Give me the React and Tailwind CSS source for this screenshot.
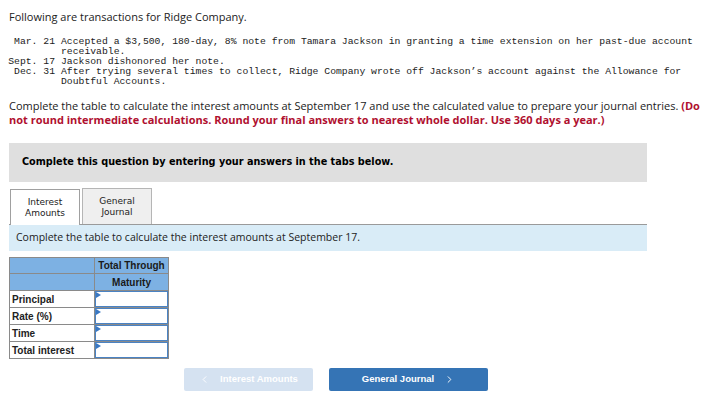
import React from 'react';
import { ChevronLeft, ChevronRight } from 'lucide-react';

const sans = { fontFamily: '"Open Sans", Lato, Arial, sans-serif' };

const transactions = [
    { date: 'Mar. 21', text: 'Accepted a $3,500, 180-day, 8% note from Tamara Jackson in granting a time extension on her past-due account receivable.' },
    { date: 'Sept. 17', text: 'Jackson dishonored her note.' },
    { date: 'Dec. 31', text: 'After trying several times to collect, Ridge Company wrote off Jackson\u2019s account against the Allowance for Doubtful Accounts.' },
];

const rows = ['Principal', 'Rate (%)', 'Time', 'Total interest'];

const InputCell = () => (
    <td className="p-0 border border-[#8a8a8a] bg-white">
        <div className="relative h-[16px] border border-[#4a83c4] bg-white">
            <span className="absolute left-0 top-0 w-0 h-0 border-t-[3px] border-b-[3px] border-l-[5px] border-t-transparent border-b-transparent border-l-[#3a78c3]" />
        </div>
    </td>
);

const App = () => {
    return (
        <div className="w-[720px] h-[401px] bg-white text-[#222] overflow-hidden">
            <p className="pt-[10px] pl-[9px] text-[11px] leading-[14px]" style={sans}>
                Following are transactions for Ridge Company.
            </p>

            <div className="mt-[13px] pl-[7px] text-[9.75px] leading-[10px] text-[#222]" style={{ fontFamily: '"Liberation Mono", "Courier New", monospace' }}>
                {transactions.map((t) => (
                    <div key={t.date} className="flex">
                        <div className="w-[48px] text-right shrink-0 whitespace-pre">{t.date}</div>
                        <div className="w-[645px] pl-[6px]">{t.text}</div>
                    </div>
                ))}
            </div>

            <p className="mt-[12px] px-[9px] text-[11px] leading-[14px]" style={sans}>
                Complete the table to calculate the interest amounts at September 17 and use the calculated value to prepare your journal entries.{' '}
                <span className="font-bold text-[#b0102f]">(Do not round intermediate calculations. Round your final answers to nearest whole dollar. Use 360 days a year.)</span>
            </p>

            <div className="ml-[9px] mt-[16px] w-[638px] h-[39px] bg-[#dfdfdf] flex items-center pl-[13px] text-[9.7px] font-bold text-black" style={{ fontFamily: '"DejaVu Sans", Verdana, sans-serif' }}>
                Complete this question by entering your answers in the tabs below.
            </div>

            <div className="ml-[9px] mt-[6px] w-[638px]" style={{ fontFamily: '"DejaVu Sans", Verdana, sans-serif' }}>
                <div className="flex gap-[2px] pl-[1px] h-[36px] items-end">
                    <div className="w-[70px] h-[36px] border border-b-0 border-[#a0a0a0] bg-white flex items-center justify-center text-center text-[9px] leading-[11px] relative top-[1px] z-10">
                        Interest<br />Amounts
                    </div>
                    <div className="w-[70px] h-[36px] border border-b-0 border-[#b5b5b5] bg-[#efefef] flex items-center justify-center text-center text-[9px] leading-[11px]">
                        General<br />Journal
                    </div>
                </div>
                <div className="h-[27px] border-t border-[#9a9a9a] bg-[#d9ecf7] flex items-center pl-[7px] text-[10.5px]" style={sans}>
                    Complete the table to calculate the interest amounts at September 17.
                </div>
            </div>

            <table className="ml-[9px] mt-[6px] border-collapse text-[10px] font-bold" style={{ fontFamily: '"Liberation Sans", Arial, sans-serif' }}>
                <thead>
                    <tr className="h-[16px]">
                        <th className="w-[85px] border border-[#8a8a8a] bg-[#7db1e3]"></th>
                        <th className="w-[74px] border border-[#8a8a8a] bg-[#7db1e3] text-center font-bold text-[#1a1a1a]">Total Through</th>
                    </tr>
                    <tr className="h-[17px]">
                        <th className="border border-[#8a8a8a] bg-[#7db1e3]"></th>
                        <th className="border border-[#8a8a8a] bg-[#7db1e3] text-center font-bold text-[#1a1a1a]">Maturity</th>
                    </tr>
                </thead>
                <tbody>
                    {rows.map((r) => (
                        <tr key={r} className="h-[17px]">
                            <td className="border border-[#8a8a8a] pl-[2px] text-left">{r}</td>
                            <InputCell />
                        </tr>
                    ))}
                </tbody>
            </table>

            <div className="flex gap-[16px] ml-[184px] mt-[9px] text-[9.5px] font-bold text-white" style={{ fontFamily: '"Liberation Sans", Arial, sans-serif' }}>
                <button className="w-[129px] h-[23px] rounded-[2px] bg-[#d5e2f1] flex items-center justify-center gap-[10px]">
                    <ChevronLeft size={11} strokeWidth={2} />
                    <span>Interest Amounts</span>
                </button>
                <button className="w-[159px] h-[23px] rounded-[2px] bg-[#3574b5] flex items-center justify-center gap-[10px]">
                    <span>General Journal</span>
                    <ChevronRight size={11} strokeWidth={2} />
                </button>
            </div>
        </div>
    );
};

export default App;
